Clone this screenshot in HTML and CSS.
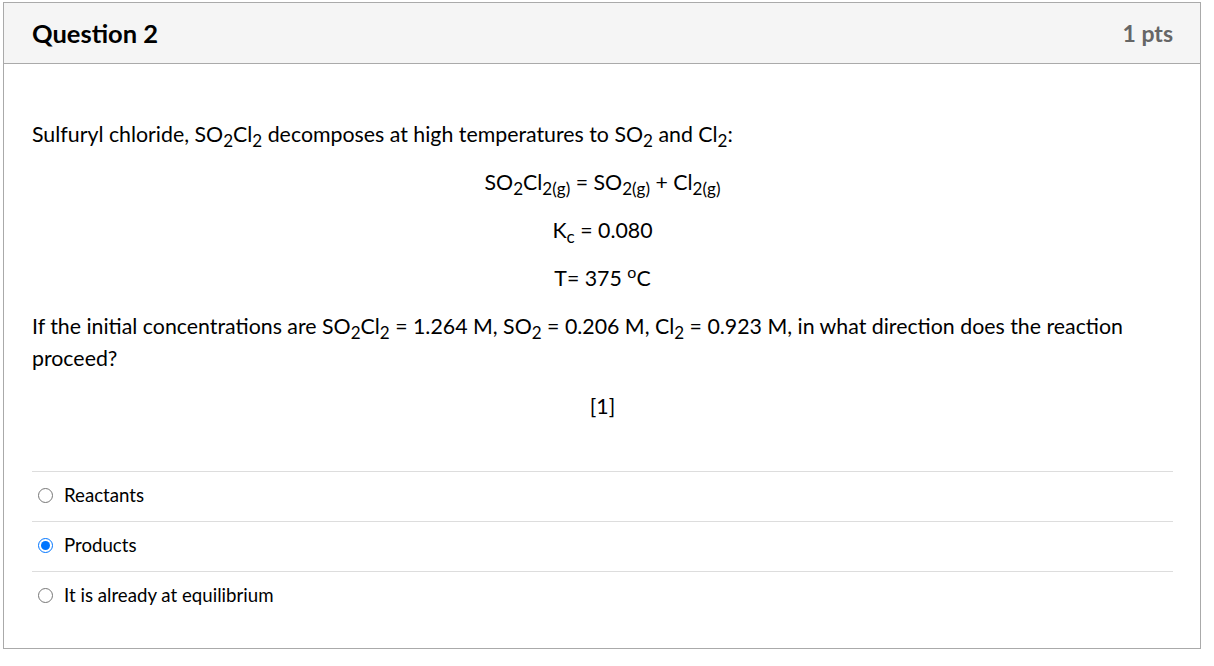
FILE: index.html
```html
<!DOCTYPE html>
<html>
<head>
<meta charset="utf-8">
<link rel="stylesheet" href="styles.css">
</head>
<body>
<div class="question">
  <div class="q-header">
    <h2 class="q-title">Question 2</h2>
    <span class="q-pts">1 pts</span>
  </div>
  <div class="q-body">
    <p>Sulfuryl chloride, SO<sub>2</sub>Cl<sub>2</sub> decomposes at high temperatures to SO<sub>2</sub> and Cl<sub>2</sub>:</p>
    <p class="center">SO<sub>2</sub>Cl<sub>2(g)</sub> = SO<sub>2(g)</sub> + Cl<sub>2(g)</sub></p>
    <p class="center">K<sub>c</sub> = 0.080</p>
    <p class="center">T= 375 <sup>o</sup>C</p>
    <p>If the initial concentrations are SO<sub>2</sub>Cl<sub>2</sub> = 1.264 M, SO<sub>2</sub> = 0.206 M, Cl<sub>2</sub> = 0.923 M, in what direction does the reaction proceed?</p>
    <p class="center">[1]</p>
    <div class="answers">
      <label class="answer"><input type="radio" name="a"><span>Reactants</span></label>
      <label class="answer"><input type="radio" name="a" checked><span>Products</span></label>
      <label class="answer"><input type="radio" name="a"><span>It is already at equilibrium</span></label>
    </div>
  </div>
</div>
</body>
</html>
```
FILE: styles.css
```css
html, body {
  margin: 0;
  padding: 0;
  background: #fff;
}
body {
  font-family: Lato, "Liberation Sans", sans-serif;
  color: #000;
}
.question {
  margin: 2px 0 0 3px;
  width: 1198px;
  height: 647px;
  box-sizing: border-box;
  border: 1px solid #aaaaaa;
}
.q-header {
  height: 61px;
  box-sizing: border-box;
  background: #f5f5f5;
  border-bottom: 1px solid #aaaaaa;
  display: flex;
  align-items: center;
  justify-content: space-between;
  padding: 0 27px 0 28px;
}
.q-title {
  margin: 0;
  font-size: 25.5px;
  font-weight: 700;
  color: #000;
}
.q-pts {
  font-size: 23px;
  font-weight: 700;
  color: #666;
}
.q-body {
  padding: 54px 27px 0 28px;
  font-size: 21.33px;
}
.q-body p {
  margin: 0 0 16px;
  line-height: 32px;
}
.q-body sub {
  font-size: 0.8em;
  line-height: 1;
}
.q-body sup {
  font-size: 0.75em;
  line-height: 1;
}
.center {
  text-align: center;
}
.answers {
  margin-top: 49px;
}
.answer {
  display: flex;
  align-items: center;
  height: 50px;
  padding-bottom: 4px;
  border-top: 1px solid #dddddd;
  box-sizing: border-box;
  font-size: 18.67px;
}
.answer input {
  width: 15px;
  height: 15px;
  margin: 2px 11px 0 6px;
}
```
